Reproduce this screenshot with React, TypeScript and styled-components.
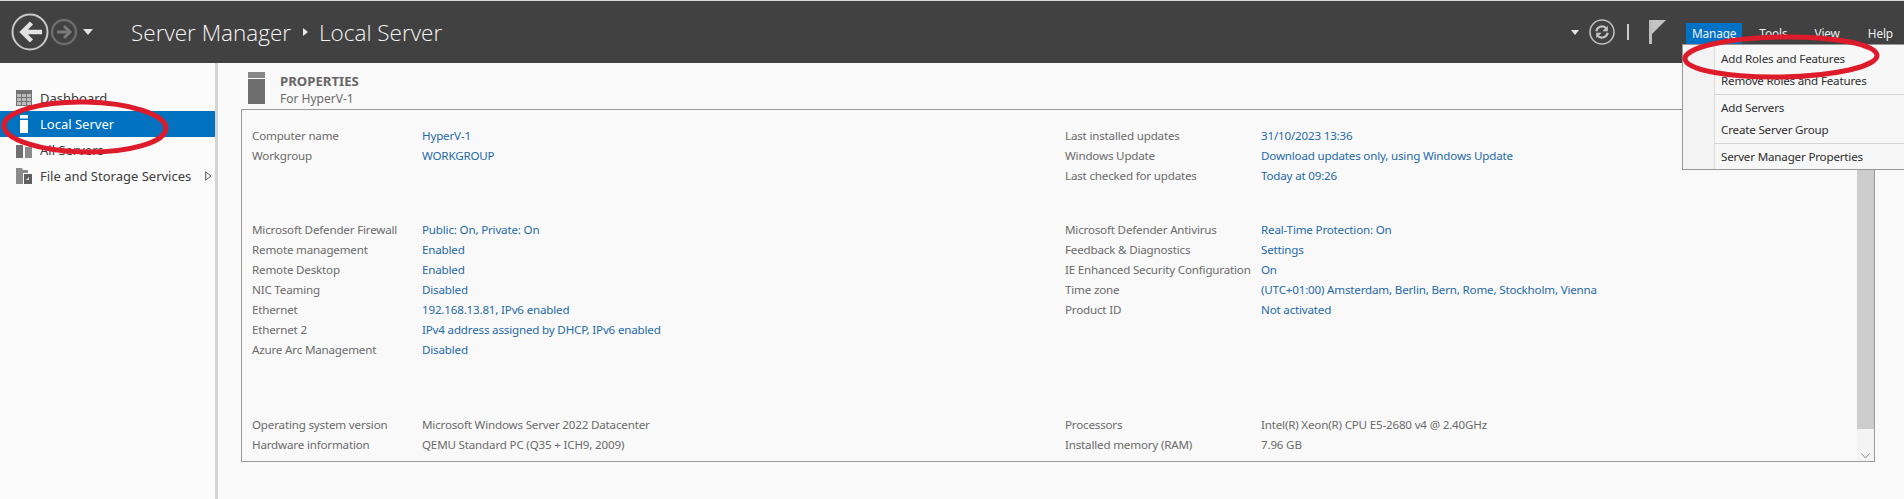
import React from "react"
import styled, { createGlobalStyle } from "styled-components"

const GlobalStyle = createGlobalStyle`
  html, body {
    margin: 0;
    padding: 0;
    height: 100%;
    overflow: hidden;
    background: #f9f9f9;
  }
  #root {
    height: 100%;
  }
`

const UI_FONT = `"Noto Sans", "Open Sans", Arial, sans-serif`

const Window = styled.div`
  position: relative;
  display: flex;
  flex-direction: column;
  width: 1904px;
  height: 499px;
  overflow: hidden;
  background: #f9f9f9;
  font-family: ${UI_FONT};
  font-size: 11.6px;
  letter-spacing: -0.18px;
`

const Header = styled.header`
  flex: none;
  display: flex;
  align-items: center;
  height: 63px;
  padding: 0 0 0 10px;
  background: #414141;
  border-top: 1px solid #d8d8d8;
  box-sizing: border-box;
`

const NavButtons = styled.div`
  display: flex;
  align-items: center;
  width: 121px;
`

const Title = styled.h1`
  margin: 0;
  display: flex;
  align-items: center;
  font-family: "Open Sans", sans-serif;
  font-weight: 300;
  font-size: 22.5px;
  letter-spacing: 0;
  color: #f4f4f4;
`

const Crumb = styled.span`
  display: block;
  width: 0;
  height: 0;
  margin: 0 11px 0 12px;
  border-left: 5px solid #e8e8e8;
  border-top: 4px solid transparent;
  border-bottom: 4px solid transparent;
`

const Tools = styled.div`
  margin-left: auto;
  display: flex;
  align-items: center;
  height: 100%;
`

const Caret = styled.span<{ $size: number; $before?: number; $after?: number }>`
  display: block;
  width: 0;
  height: 0;
  margin: 0 ${p => p.$after ?? 0}px 0 ${p => p.$before ?? 0}px;
  border-top: ${p => p.$size + 1}px solid #e4e4e4;
  border-left: ${p => p.$size}px solid transparent;
  border-right: ${p => p.$size}px solid transparent;
`

const Divider = styled.span`
  display: block;
  width: 2px;
  height: 16px;
  margin: 0 20px 0 11px;
  background: #c8c8c8;
`

const MenuBar = styled.nav`
  display: flex;
  margin-left: 19px;
  padding-right: 5px;
  align-self: flex-start;
  margin-top: 22px;
`

const MenuTitle = styled.span<{ $active?: boolean; $gap?: number }>`
  display: block;
  height: 22px;
  line-height: 21px;
  padding: 0 6px;
  margin-right: ${p => p.$gap ?? 0}px;
  font-size: 11.8px;
  letter-spacing: -0.12px;
  color: #f0f0f0;
  background: ${p => (p.$active ? "#0072c6" : "transparent")};
`

const Body = styled.div`
  flex: 1;
  display: flex;
  min-height: 0;
`

const Sidebar = styled.aside`
  flex: none;
  width: 215px;
  padding-top: 22px;
  border-right: 3px solid #d4d4d4;
  background: #fbfbfb;
`

const NavItem = styled.div<{ $active?: boolean }>`
  display: flex;
  align-items: center;
  gap: 8px;
  height: 26px;
  padding-left: 16px;
  font-size: 13px;
  letter-spacing: 0;
  color: ${p => (p.$active ? "#ffffff" : "#3c3c3c")};
  background: ${p => (p.$active ? "#0072c0" : "transparent")};
`

const NavExpand = styled.span`
  display: block;
  margin-left: auto;
  margin-right: 3px;
`

const Content = styled.main`
  flex: 1;
  min-width: 0;
  display: flex;
  flex-direction: column;
  padding: 9px 29px 0 23px;
`

const SectionHead = styled.div`
  flex: none;
  display: flex;
  align-items: flex-start;
  gap: 15px;
  height: 37px;
  padding-left: 7px;
`

const SectionTitle = styled.div`
  font-weight: 700;
  font-size: 13.2px;
  letter-spacing: 0;
  line-height: 18px;
  color: #666666;
`

const SectionSub = styled.div`
  font-size: 12px;
  letter-spacing: 0;
  line-height: 17px;
  color: #6a6a6a;
`

const Panel = styled.section`
  flex: none;
  display: flex;
  height: 353px;
  box-sizing: border-box;
  border: 1px solid #9a9a9a;
  overflow: hidden;
`

const Properties = styled.div`
  flex: 1;
  display: grid;
  grid-template-columns: 813px 1fr;
  padding: 16px 0 0 10px;
`

const Group = styled.div<{ $height: number }>`
  height: ${p => p.$height}px;
`

const Row = styled.div`
  display: grid;
  grid-template-columns: 170px 1fr;
  height: 20px;
  line-height: 19px;
  white-space: nowrap;
`

const RightRow = styled(Row)`
  grid-template-columns: 196px 1fr;
`

const Label = styled.span`
  color: #6b6b6b;
`

const Value = styled.span`
  color: #6b6b6b;
`

const LinkValue = styled.span`
  color: #1f6aa8;
`

const Scrollbar = styled.div`
  flex: none;
  display: flex;
  flex-direction: column;
  width: 17px;
  background: #f4f4f4;
`

const ScrollThumb = styled.div`
  height: 319px;
  background: #cdcdcd;
`

const ScrollArrow = styled.div`
  flex: 1;
  display: flex;
  align-items: flex-end;
  justify-content: center;
  padding-bottom: 2px;
`

const DropMenu = styled.div`
  position: absolute;
  top: 44px;
  left: 1682px;
  right: 0;
  height: 126px;
  box-sizing: border-box;
  padding: 3px 0 0 38px;
  background: linear-gradient(to right, #f3f3f3 31px, #dcdcdc 31px, #dcdcdc 32px, #f7f7f7 32px);
  border: 1px solid #979797;
  border-right: none;
  color: #2e2e2e;
`

const DropItem = styled.div`
  height: 22px;
  line-height: 22px;
  white-space: nowrap;
`

const DropSeparator = styled.div`
  height: 1px;
  margin: 2px 0 2px -6px;
  background: #d4d4d4;
`

const Annotation = styled.svg`
  position: absolute;
  top: 0;
  left: 0;
  width: 1904px;
  height: 499px;
  pointer-events: none;
`

const BackIcon = () => (
  <svg width="40" height="40" viewBox="0 0 40 40">
    <circle cx="20" cy="20" r="17.5" fill="none" stroke="#c8c8c8" strokeWidth="2" />
    <path d="M32 20H13M21.5 11 12.5 20l9 9" fill="none" stroke="#e2e2e2" strokeWidth="4.5" />
  </svg>
)

const ForwardIcon = () => (
  <svg width="28" height="28" viewBox="0 0 28 28">
    <circle cx="14" cy="14" r="12" fill="none" stroke="#6e6e6e" strokeWidth="2.4" />
    <path d="M7 14h13M14 8l6 6-6 6" fill="none" stroke="#7a7a7a" strokeWidth="3" />
  </svg>
)

const RefreshIcon = () => (
  <svg width="28" height="28" viewBox="0 0 28 28">
    <circle cx="14" cy="14" r="12" fill="none" stroke="#bcbcbc" strokeWidth="1.6" />
    <path d="M8.3 13.2A5.8 5.8 0 0 1 18 10" fill="none" stroke="#c4c4c4" strokeWidth="2.2" />
    <path d="M19.8 7.8v5.4h-5.4z" fill="#c4c4c4" />
    <path d="M19.7 14.8A5.8 5.8 0 0 1 10 18" fill="none" stroke="#c4c4c4" strokeWidth="2.2" />
    <path d="M8.2 20.2v-5.4h5.4z" fill="#c4c4c4" />
  </svg>
)

const FlagIcon = () => (
  <svg width="18" height="24" viewBox="0 0 18 24">
    <rect x="0" y="0" width="3" height="24" fill="#bdbdbd" />
    <path d="M3 0h14L3 14z" fill="#c4c4c4" />
  </svg>
)

const GridIcon = () => (
  <svg width="16" height="16" viewBox="0 0 16 16">
    <path d="M0 0h16v16H0z" fill="#737373" />
    <path d="M1 4h4v3H1zM6 4h4v3H6zM11 4h4v3h-4zM1 8h4v3H1zM6 8h4v3H6zM11 8h4v3h-4zM1 12h4v3H1zM6 12h4v3H6zM11 12h4v3h-4z" fill="#bdbdbd" />
  </svg>
)

const ServerIcon = () => (
  <svg width="16" height="18" viewBox="0 0 16 18">
    <path d="M4 0h8v3.5H4zM4 5h8v13H4z" fill="#ffffff" />
  </svg>
)

const ServersIcon = () => (
  <svg width="16" height="16" viewBox="0 0 16 16">
    <path d="M0 3h7v13H0z" fill="#6f6f6f" />
    <path d="M9 5h7v11H9z" fill="#8a8a8a" />
  </svg>
)

const StorageIcon = () => (
  <svg width="16" height="16" viewBox="0 0 16 16">
    <path d="M0 0h6l1 2h5v3H7v11H0z" fill="#8a8a8a" />
    <path d="M8 6h8v10H8z" fill="#5f5f5f" />
    <path d="M10 12l3-3v3z" fill="#d8d8d8" />
  </svg>
)

const ExpandIcon = () => (
  <svg width="7" height="10" viewBox="0 0 7 10">
    <path d="M.7.8 6 5 .7 9.2z" fill="none" stroke="#555" strokeWidth="1" />
  </svg>
)

const LargeServerIcon = () => (
  <svg width="17" height="32" viewBox="0 0 17 32">
    <rect width="17" height="6" fill="#868686" />
    <rect y="7" width="17" height="25" fill="#6e6e6e" />
  </svg>
)

type Prop = { label: string; value: string; plain?: boolean }
type PropGroup = { height: number; rows: Prop[] }

const leftGroups: PropGroup[] = [
  {
    height: 94,
    rows: [
      { label: "Computer name", value: "HyperV-1" },
      { label: "Workgroup", value: "WORKGROUP" },
    ],
  },
  {
    height: 195,
    rows: [
      { label: "Microsoft Defender Firewall", value: "Public: On, Private: On" },
      { label: "Remote management", value: "Enabled" },
      { label: "Remote Desktop", value: "Enabled" },
      { label: "NIC Teaming", value: "Disabled" },
      { label: "Ethernet", value: "192.168.13.81, IPv6 enabled" },
      { label: "Ethernet 2", value: "IPv4 address assigned by DHCP, IPv6 enabled" },
      { label: "Azure Arc Management", value: "Disabled" },
    ],
  },
  {
    height: 60,
    rows: [
      { label: "Operating system version", value: "Microsoft Windows Server 2022 Datacenter", plain: true },
      { label: "Hardware information", value: "QEMU Standard PC (Q35 + ICH9, 2009)", plain: true },
    ],
  },
]

const rightGroups: PropGroup[] = [
  {
    height: 94,
    rows: [
      { label: "Last installed updates", value: "31/10/2023 13:36" },
      { label: "Windows Update", value: "Download updates only, using Windows Update" },
      { label: "Last checked for updates", value: "Today at 09:26" },
    ],
  },
  {
    height: 195,
    rows: [
      { label: "Microsoft Defender Antivirus", value: "Real-Time Protection: On" },
      { label: "Feedback & Diagnostics", value: "Settings" },
      { label: "IE Enhanced Security Configuration", value: "On" },
      { label: "Time zone", value: "(UTC+01:00) Amsterdam, Berlin, Bern, Rome, Stockholm, Vienna" },
      { label: "Product ID", value: "Not activated" },
    ],
  },
  {
    height: 60,
    rows: [
      { label: "Processors", value: "Intel(R) Xeon(R) CPU E5-2680 v4 @ 2.40GHz", plain: true },
      { label: "Installed memory (RAM)", value: "7.96 GB", plain: true },
      { label: "Total disk space", value: "931.27 GB", plain: true },
    ],
  },
]

export default function App() {
  return (
    <Window>
      <GlobalStyle />
      <Header>
        <NavButtons>
          <BackIcon />
          <ForwardIcon />
          <Caret $size={5} $before={5} />
        </NavButtons>
        <Title>
          Server Manager
          <Crumb />
          Local Server
        </Title>
        <Tools>
          <Caret $size={4} $after={9} />
          <RefreshIcon />
          <Divider />
          <FlagIcon />
          <MenuBar>
            <MenuTitle $active $gap={11}>Manage</MenuTitle>
            <MenuTitle $gap={15}>Tools</MenuTitle>
            <MenuTitle $gap={16}>View</MenuTitle>
            <MenuTitle>Help</MenuTitle>
          </MenuBar>
        </Tools>
      </Header>
      <Body>
        <Sidebar>
          <NavItem>
            <GridIcon />
            Dashboard
          </NavItem>
          <NavItem $active>
            <ServerIcon />
            Local Server
          </NavItem>
          <NavItem>
            <ServersIcon />
            All Servers
          </NavItem>
          <NavItem>
            <StorageIcon />
            File and Storage Services
            <NavExpand>
              <ExpandIcon />
            </NavExpand>
          </NavItem>
        </Sidebar>
        <Content>
          <SectionHead>
            <LargeServerIcon />
            <div>
              <SectionTitle>PROPERTIES</SectionTitle>
              <SectionSub>For HyperV-1</SectionSub>
            </div>
          </SectionHead>
          <Panel>
            <Properties>
              <div>
                {leftGroups.map(g => (
                  <Group key={g.rows[0].label} $height={g.height}>
                    {g.rows.map(r => (
                      <Row key={r.label}>
                        <Label>{r.label}</Label>
                        {r.plain ? <Value>{r.value}</Value> : <LinkValue>{r.value}</LinkValue>}
                      </Row>
                    ))}
                  </Group>
                ))}
              </div>
              <div>
                {rightGroups.map(g => (
                  <Group key={g.rows[0].label} $height={g.height}>
                    {g.rows.map(r => (
                      <RightRow key={r.label}>
                        <Label>{r.label}</Label>
                        {r.plain ? <Value>{r.value}</Value> : <LinkValue>{r.value}</LinkValue>}
                      </RightRow>
                    ))}
                  </Group>
                ))}
              </div>
            </Properties>
            <Scrollbar>
              <ScrollThumb />
              <ScrollArrow>
                <svg width="9" height="6" viewBox="0 0 9 6">
                  <path d="M.5.5 4.5 5l4-4.5" fill="none" stroke="#8a8a8a" />
                </svg>
              </ScrollArrow>
            </Scrollbar>
          </Panel>
        </Content>
      </Body>
      <DropMenu>
        <DropItem>Add Roles and Features</DropItem>
        <DropItem>Remove Roles and Features</DropItem>
        <DropSeparator />
        <DropItem>Add Servers</DropItem>
        <DropItem>Create Server Group</DropItem>
        <DropSeparator />
        <DropItem>Server Manager Properties</DropItem>
      </DropMenu>
      <Annotation viewBox="0 0 1904 499">
        <ellipse cx="85" cy="127" rx="81" ry="25" fill="none" stroke="#de1b2a" strokeWidth="5" transform="rotate(1 85 127)" />
        <ellipse cx="1781" cy="57" rx="96" ry="20" fill="none" stroke="#de1b2a" strokeWidth="5" transform="rotate(-1 1781 57)" />
      </Annotation>
    </Window>
  )
}
